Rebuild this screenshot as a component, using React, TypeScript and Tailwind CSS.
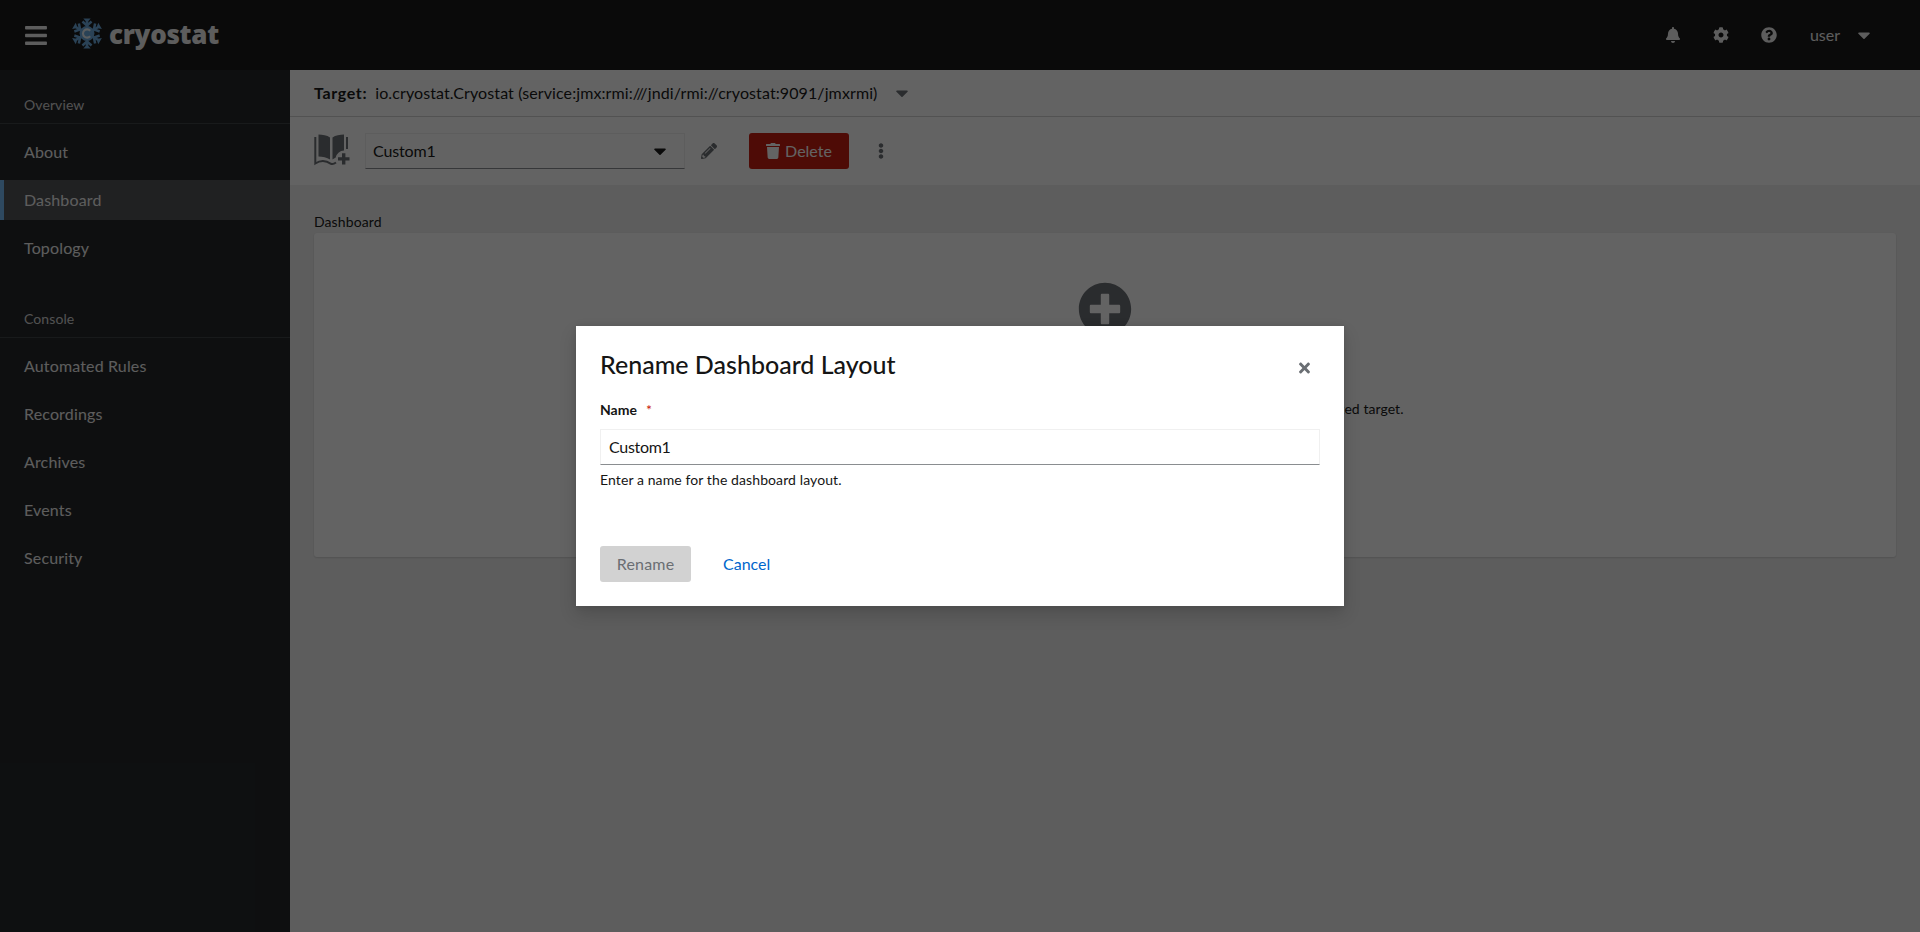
import React from "react";
import { FaBars, FaBell, FaCog, FaQuestionCircle, FaCaretDown, FaPencilAlt, FaTrash, FaEllipsisV, FaPlusCircle, FaTimes } from "react-icons/fa";

function Snowflake() {
  const arm = (
    <g fill="none" stroke="#6aa8dc" strokeWidth="2.2">
      <path d="M14 12V3" />
      <path d="M10 3.500l4 3.500 4-3.500" />
      <path d="M14 4.500L10.800 .8h6.400z" fill="#6aa8dc" stroke="none" />
    </g>
  );
  return (
    <svg width="32" height="33" viewBox="0 0 28 28" className="shrink-0 -ml-[1px]">
      {[0, 60, 120, 180, 240, 300].map((a) => (
        <g key={a} transform={`rotate(${a} 14 14)`}>{arm}</g>
      ))}
      <circle cx="14" cy="14" r="6.500" fill="#6aa8dc" />
      <path d="M16.800 11.600a3.600 3.600 0 1 0 0 4.800" fill="none" stroke="#e8eef3" strokeWidth="1.800" />
    </svg>
  );
}

function BookPlus() {
  return (
    <svg width="36" height="34" viewBox="0 0 36 34" fill="#6a6e73">
      <path d="M4.500 .5C8.500 .5 13 1.200 16 3.500V25.500C13 23.500 8.500 22.500 4.500 22.500z" />
      <path d="M18.500 3.500C21.500 1.200 26 .5 30 .5V16.500A9 9 0 0 0 21.500 23.800C20.500 24.200 19.500 24.800 18.500 25.500z" />
      <path d="M1.300 3V29.500C6 26.500 12 26.500 17 29.800C18.500 30.400 20 30 22 28.500" fill="none" stroke="#6a6e73" strokeWidth="2" />
      <path d="M33 3V15" fill="none" stroke="#6a6e73" strokeWidth="2" />
      <path d="M28 19.200h3.400v4H35.500v3.400H31.400v4H28v-4H24v-3.400h4z" />
    </svg>
  );
}

function NavSection({ title, items, active }: { title: string; items: string[]; active?: string }) {
  return (
    <section>
      <h2 className="h-[38px] pl-6 pt-2 text-sm leading-[21px] tracking-[0.1px] text-[#d2d2d2] border-b border-[#3c3f42]">{title}</h2>
      <ul className="pt-2 flex flex-col gap-2">
        {items.map((i) => (
          <li
            key={i}
            className={`h-10 flex items-center text-base tracking-[0.15px] ${i === active ? "bg-[#4f5255] border-l-4 border-[#73bcf7] pl-5" : "pl-6"} text-[#f0f0f0]`}
          >
            {i}
          </li>
        ))}
      </ul>
    </section>
  );
}

export default function App() {
  return (
    <div className="relative h-[932px] w-full overflow-hidden flex flex-col text-[#151515] bg-[#f0f0f0]" style={{ fontFamily: "Lato, 'Noto Sans', sans-serif" }}>
      <header className="h-[70px] shrink-0 bg-[#151515] flex items-center text-[#f0f0f0]">
        <div className="pl-[25px] w-[72px] shrink-0">
          <FaBars className="w-[22px] h-[25px]" />
        </div>
        <div className="flex items-center gap-[6px] mb-[3px]">
          <Snowflake />
          <span className="text-[26px] leading-none font-extrabold tracking-[-0.3px]" style={{ fontFamily: "'Open Sans', sans-serif" }}>cryostat</span>
        </div>
        <div className="ml-auto flex items-center">
          <FaBell className="w-[14px] h-[16px]" />
          <FaCog className="ml-[33px] w-[16px] h-[16px]" />
          <FaQuestionCircle className="ml-[32px] w-[16px] h-[16px]" />
          <span className="ml-[33px] text-base">user</span>
          <FaCaretDown className="ml-[14px] mr-[46px] w-5 h-5" />
        </div>
      </header>
      <div className="flex-1 flex min-h-0">
        <nav className="w-[290px] shrink-0 bg-[#212427] pt-[16px] flex flex-col gap-[32px]">
          <NavSection title="Overview" items={["About", "Dashboard", "Topology"]} active="Dashboard" />
          <NavSection title="Console" items={["Automated Rules", "Recordings", "Archives", "Events", "Security"]} />
        </nav>
        <main className="flex-1 min-w-0 flex flex-col">
          <div className="h-[47px] bg-white border-b border-[#d2d2d2] flex items-center pl-6 text-base tracking-[0.1px]">
            <span className="font-bold tracking-[0.65px]">Target:</span>
            <span className="ml-[8px]">io.cryostat.Cryostat (service:jmx:rmi:///jndi/rmi://cryostat:9091/jmxrmi)</span>
            <FaCaretDown className="ml-[15px] w-5 h-5 text-[#6a6e73]" />
          </div>
          <div className="h-[68px] bg-white flex items-center pl-6">
            <BookPlus />
            <div className="ml-[15px] w-[320px] h-9 border border-[#f0f0f0] border-b-[#8a8d90] flex items-center pl-[7px] pr-[14px] text-base">
              <span className="tracking-[-0.15px]">Custom1</span>
              <FaCaretDown className="ml-auto w-5 h-5" />
            </div>
            <FaPencilAlt className="ml-4 w-[16px] h-[16px] text-[#6a6e73]" />
            <button className="ml-[32px] w-[100px] h-9 rounded-[3px] bg-[#c9190b] text-white text-base flex items-center justify-center gap-[5px]">
              <FaTrash className="w-[14px] h-[16px]" />
              Delete
            </button>
            <FaEllipsisV className="ml-[25px] w-[14px] h-4 text-[#6a6e73]" />
          </div>
          <section className="px-6 pt-[26px]">
            <div className="text-sm leading-[22px] tracking-[0.1px]">Dashboard</div>
            <div className="h-[324px] bg-white rounded-[3px] shadow-[0_1px_2px_rgba(3,3,3,0.12),0_0_2px_rgba(3,3,3,0.06)] flex flex-col items-center pt-[49px]">
              <FaPlusCircle className="w-[54px] h-[54px] text-[#6a6e73]" />
              <div className="mt-[22px] text-xl">No Cards Added</div>
              <p className="mt-[13px] text-sm text-[#151515] tracking-[0.06px]">Add a card to begin monitoring activity on the dashboard layout for the currently selected target.</p>
            </div>
          </section>
        </main>
      </div>
      <div className="absolute inset-0 bg-[#030303]/62 flex items-center justify-center">
        <div className="relative w-[768px] h-[280px] bg-white px-6 pt-6 shadow-[0_8px_16px_rgba(3,3,3,0.16),0_0_6px_rgba(3,3,3,0.08)] flex flex-col">
          <h1 className="text-[25px] leading-[28px] font-medium text-[#151515]">Rename Dashboard Layout</h1>
          <button className="absolute top-[34px] right-[33px] text-[#6a6e73]"><FaTimes className="w-[13px] h-[16px]" /></button>
          <label className="mt-[21px] text-sm font-bold leading-[21px] flex">
            Name<span className="ml-[9px] text-[#c9190b] font-normal">*</span>
          </label>
          <div className="mt-[9px] h-9 w-[720px] border border-[#f0f0f0] border-b-[#8a8d90] flex items-center pl-2 text-base tracking-[-0.3px]">Custom1</div>
          <p className="mt-[4px] text-sm leading-[21px] text-[#151515] tracking-[0.1px]">Enter a name for the dashboard layout.</p>
          <div className="mt-auto mb-6 flex items-center">
            <button className="w-[91px] h-9 rounded-[3px] bg-[#d2d2d2] text-[#6a6e73] text-base tracking-[0.2px]">Rename</button>
            <button className="ml-8 text-base text-[#06c]">Cancel</button>
          </div>
        </div>
      </div>
    </div>
  );
}
